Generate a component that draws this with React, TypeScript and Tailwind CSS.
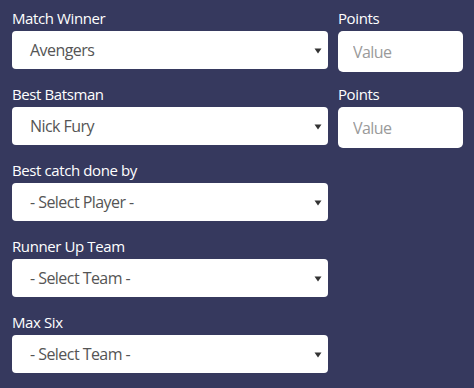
import { useState } from "react"

interface Row {
  label: string
  value: string
  points?: boolean
}

const rows: Row[] = [
  { label: "Match Winner", value: "Avengers", points: true },
  { label: "Best Batsman", value: "Nick Fury", points: true },
  { label: "Best catch done by", value: "- Select Player -" },
  { label: "Runner Up Team", value: "- Select Team -" },
  { label: "Max Six", value: "- Select Team -" },
]

function FakeSelect({ value }: { value: string }) {
  return (
    <div className="flex h-[38px] items-center justify-between rounded-[4px] bg-white pl-[18px] pr-[6px] text-[16px] tracking-[-0.55px] text-[#555]">
      <span>{value}</span>
      <svg width="8" height="6" viewBox="0 0 8 6" className="mt-[1px]">
        <path d="M0.5 0.5 H7.5 L4 5.5 Z" fill="#333" />
      </svg>
    </div>
  )
}

export default function App() {
  const [points, setPoints] = useState<Record<number, string>>({})

  return (
    <div
      className="min-h-screen w-full bg-[#36395e] pl-[12px] pr-[11px] pt-[8px]"
      style={{ fontFamily: '"Open Sans", "Liberation Sans", sans-serif' }}
    >
      <div className="grid auto-rows-[61px] gap-y-[15px]">
        {rows.map((row, i) => (
          <div key={row.label} className="flex items-start gap-[10px]">
            <div className="w-[316px]">
              <div className="mb-[3px] text-[15px] font-medium leading-[20px] tracking-[-0.4px] text-white">
                {row.label}
              </div>
              <FakeSelect value={row.value} />
            </div>
            {row.points && (
              <div className="w-[125px]">
                <div className="mb-[3px] text-[15px] font-medium leading-[20px] tracking-[-0.4px] text-white">
                  Points
                </div>
                <input
                  value={points[i] ?? ""}
                  onChange={(e) => setPoints({ ...points, [i]: e.target.value })}
                  placeholder="Value"
                  className="h-[41px] w-full rounded-[5px] bg-white px-[15px] text-[16px] tracking-[-0.6px] text-[#555] outline-none placeholder:text-[#9a9a9a]"
                />
              </div>
            )}
          </div>
        ))}
      </div>
    </div>
  )
}
